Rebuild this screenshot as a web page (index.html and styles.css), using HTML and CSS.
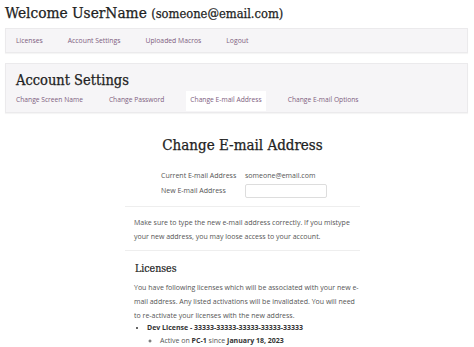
FILE: index.html
```html
<!DOCTYPE html>
<html>
<head>
<meta charset="utf-8">
<link rel="stylesheet" href="styles.css">
</head>
<body>
<h1 class="welcome">Welcome UserName <span class="email">(someone@email.com)</span></h1>
<nav class="box topnav">
  <a href="#">Licenses</a>
  <a href="#">Account Settings</a>
  <a href="#">Uploaded Macros</a>
  <a href="#">Logout</a>
</nav>
<section class="box settings">
  <h2 class="settings-title">Account Settings</h2>
  <div class="subnav">
    <a href="#">Change Screen Name</a>
    <a href="#">Change Password</a>
    <a href="#" class="active">Change E-mail Address</a>
    <a href="#">Change E-mail Options</a>
  </div>
</section>
<main class="content">
  <h2 class="page-title">Change E-mail Address</h2>
  <div class="form">
    <div class="label">Current E-mail Address</div>
    <div class="value">someone@email.com</div>
    <div class="label">New E-mail Address</div>
    <div class="value"><input type="text" class="input"></div>
  </div>
  <hr class="rule">
  <p class="note">Make sure to type the new e-mail address correctly. If you mistype your new address, you may loose access to your account.</p>
  <hr class="rule">
  <h3 class="lic-title">Licenses</h3>
  <p class="note lic">You have following licenses which will be associated with your new e-mail address. Any listed activations will be invalidated. You will need to re-activate your licenses with the new address.</p>
  <ul class="list">
    <li><b>Dev License - 33333-33333-33333-33333-33333</b>
      <ul class="sublist">
        <li>Active on <b>PC-1</b> since <b>January 18, 2023</b></li>
      </ul>
    </li>
  </ul>
</main>
</body>
</html>
```
FILE: styles.css
```css
html, body {
  margin: 0;
  padding: 0;
  background: #fff;
}
body {
  padding: 3px 6px 0 5px;
  font-family: "Open Sans", sans-serif;
  font-size: 7px;
  color: #555;
  overflow: hidden;
}
.welcome {
  margin: 0;
  font-family: "DejaVu Serif Condensed", "DejaVu Serif", serif;
  font-weight: normal;
  font-size: 15.3px;
  line-height: 20px;
  color: #222;
  -webkit-text-stroke: 0.25px #222;
}
.welcome .email {
  font-size: 12.8px;
}
.box {
  background: #f6f5f7;
  border: 1px solid #ebeaec;
  box-shadow: 0 1px 1px rgba(0,0,0,0.04);
}
.topnav {
  margin-top: 4px;
  height: 23px;
  display: flex;
  align-items: center;
  padding-left: 10px;
  font-size: 6.8px;
}
a {
  color: #7e5e80;
  text-decoration: none;
}
.topnav a {
  margin-right: 25px;
}
.settings {
  margin-top: 10px;
  height: 48px;
  padding-left: 10px;
  display: flex;
  flex-direction: column;
}
.settings-title {
  margin: 0;
  padding-top: 5px;
  font-family: "DejaVu Serif Condensed", "DejaVu Serif", serif;
  font-weight: normal;
  font-size: 14.5px;
  line-height: 22px;
  color: #222;
  -webkit-text-stroke: 0.25px #222;
}
.subnav {
  display: flex;
  gap: 18px;
  font-size: 6.7px;
}
.subnav a {
  padding: 4px 4px 6px;
  line-height: 10px;
}
.subnav a:first-child {
  padding-left: 0;
}
.subnav a.active {
  background: #fff;
}
.content {
  width: 235px;
  margin-left: 120px;
}
.page-title {
  margin: 20px 0 0;
  text-align: center;
  font-family: "DejaVu Serif Condensed", "DejaVu Serif", serif;
  font-weight: normal;
  font-size: 15px;
  line-height: 24px;
  color: #222;
  -webkit-text-stroke: 0.25px #222;
}
.form {
  display: grid;
  grid-template-columns: 84px auto;
  margin: 12px 0 0 36px;
  row-gap: 2px;
  line-height: 13px;
}
.input {
  width: 82px;
  height: 14px;
  border: 1px solid #ddd;
  border-radius: 2px;
  padding: 0;
  margin: 0;
  box-sizing: border-box;
}
.rule {
  border: 0;
  border-top: 1px solid #eee;
  margin: 6px 0 0 0;
}
.note {
  margin: 9px 0 0 9px;
  line-height: 14px;
}
.lic-title {
  margin: 9px 0 0 10px;
  font-family: "DejaVu Serif Condensed", "DejaVu Serif", serif;
  font-weight: normal;
  font-size: 10.5px;
  line-height: 16px;
  color: #222;
  -webkit-text-stroke: 0.2px #222;
}
.note.lic {
  margin-top: 5px;
  line-height: 14px;
}
.list {
  margin: -2px 0 0 9px;
  padding-left: 13px;
  line-height: 13px;
  color: #333;
}
.sublist {
  margin: 0;
  padding-left: 13px;
  list-style-type: circle;
  color: #555;
}
b {
  color: #333;
  font-weight: bold;
}
```
